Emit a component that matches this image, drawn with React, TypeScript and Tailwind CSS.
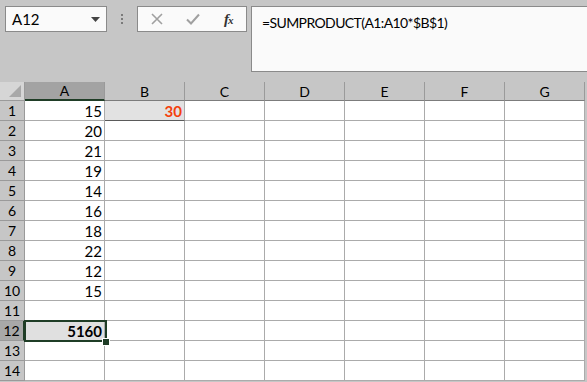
import React from 'react';

const cols = ['A', 'B', 'C', 'D', 'E', 'F', 'G'];
const values: Record<number, string> = {
  1: '15', 2: '20', 3: '21', 4: '19', 5: '14', 6: '16', 7: '18', 8: '22', 9: '12', 10: '15', 12: '5160',
};

function Cell({ row, col }: { row: number; col: string }) {
  let content: React.ReactNode = null;
  let cls = 'bg-white';
  if (col === 'A' && values[row]) {
    content = values[row];
    if (row === 12) cls = 'bg-[#e0e0e0] font-bold';
  }
  if (col === 'B' && row === 1) {
    content = <span className="text-[#f43f0c] font-bold">30</span>;
    cls = 'bg-[#e2e2e2] border-b-[#5a5a5a]';
  }
  return (
    <div
      className={`w-[80px] shrink-0 h-full border-r border-b border-[#ababab] flex items-center justify-end pr-[2px] pt-[1px] text-[15px] text-black ${cls}`}
    >
      {content}
    </div>
  );
}

export default function App() {
  const rows = Array.from({ length: 14 }, (_, i) => i + 1);
  return (
    <div className="w-[587px] h-[382px] overflow-hidden bg-[#c6c6c6] font-['Lato',_'Liberation_Sans',_sans-serif]">
      {/* toolbar / formula bar */}
      <div className="h-[82px] flex items-start pt-[6px]">
        <div className="ml-[5px] w-[102px] h-[26px] bg-[#fafafa] border border-[#8a8a8a] flex items-center justify-between pl-[6px] pr-[6px]">
          <span className="text-[15px] text-black">A12</span>
          <svg width="9" height="5" viewBox="0 0 9 5"><path d="M0 0h9L4.5 5z" fill="#444" /></svg>
        </div>
        <div className="w-[30px] h-[26px] flex flex-col items-center justify-center gap-[2px]">
          <span className="w-[2px] h-[2px] bg-[#7a7a7a]" />
          <span className="w-[2px] h-[2px] bg-[#7a7a7a]" />
          <span className="w-[2px] h-[2px] bg-[#7a7a7a]" />
        </div>
        <div className="w-[110px] h-[26px] bg-[#fafafa] border border-[#8a8a8a] flex items-center">
          <svg className="ml-[13px]" width="12" height="12" viewBox="0 0 12 12">
            <path d="M1 1L11 11M11 1L1 11" stroke="#a0a0a0" strokeWidth="1.6" />
          </svg>
          <svg className="ml-[23px]" width="14" height="12" viewBox="0 0 14 12">
            <path d="M1 6.5L5 10.5L13 1.5" stroke="#a0a0a0" strokeWidth="2" fill="none" />
          </svg>
          <span className="ml-[24px] text-[15px] italic font-bold text-[#333] font-['Liberation_Serif',_serif] tracking-[-1px]">
            f<span className="text-[11px]">x</span>
          </span>
        </div>
        <div className="ml-[4px] flex-1 h-[66px] bg-[#fafafa] border border-[#8a8a8a] border-r-0 pl-[10px] pt-[3px]">
          <span className="text-[14px] tracking-[-0.6px] text-black">=SUMPRODUCT(A1:A10*$B$1)</span>
        </div>
      </div>

      {/* grid */}
      <div className="relative">
        {/* header row */}
        <div className="flex h-[19px]">
          <div className="w-[25px] shrink-0 h-full border-r border-b border-[#9a9a9a] bg-[#d6d6d6] relative overflow-hidden">
            <svg className="absolute right-[3px] bottom-[3px]" width="12" height="12" viewBox="0 0 12 12">
              <path d="M12 0V12H0z" fill="#a8a8a8" />
            </svg>
          </div>
          {cols.map((c) => (
            <div
              key={c}
              className={`w-[80px] shrink-0 h-full border-r flex items-center justify-center text-[14px] text-black ${
                c === 'A'
                  ? 'bg-[#a3a3a3] border-[#9a9a9a] border-b-2 border-b-[#1f3d26]'
                  : 'bg-[#c6c6c6] border-[#9a9a9a] border-b border-b-[#7c7c7c]'
              }`}
            >
              {c}
            </div>
          ))}
        </div>
        {rows.map((r) => (
          <div key={r} className="flex h-[20px]">
            <div
              className={`w-[25px] shrink-0 h-full border-r border-b border-[#9a9a9a] flex items-center justify-center text-[14px] text-black ${
                r === 12 ? 'bg-[#a8a8a8] border-r-2 border-r-[#1f3d26]' : 'bg-[#c6c6c6]'
              }`}
            >
              {r}
            </div>
            {cols.map((c) => (
              <Cell key={c} row={r} col={c} />
            ))}
          </div>
        ))}
        {/* selection box */}
        <div className="absolute left-[24px] top-[238px] w-[83px] h-[22px] border-2 border-[#1f3d26] pointer-events-none" />
        <div className="absolute left-[102px] top-[256px] w-[6px] h-[6px] bg-[#1f3d26] border border-white box-content" />
      </div>
    </div>
  );
}
